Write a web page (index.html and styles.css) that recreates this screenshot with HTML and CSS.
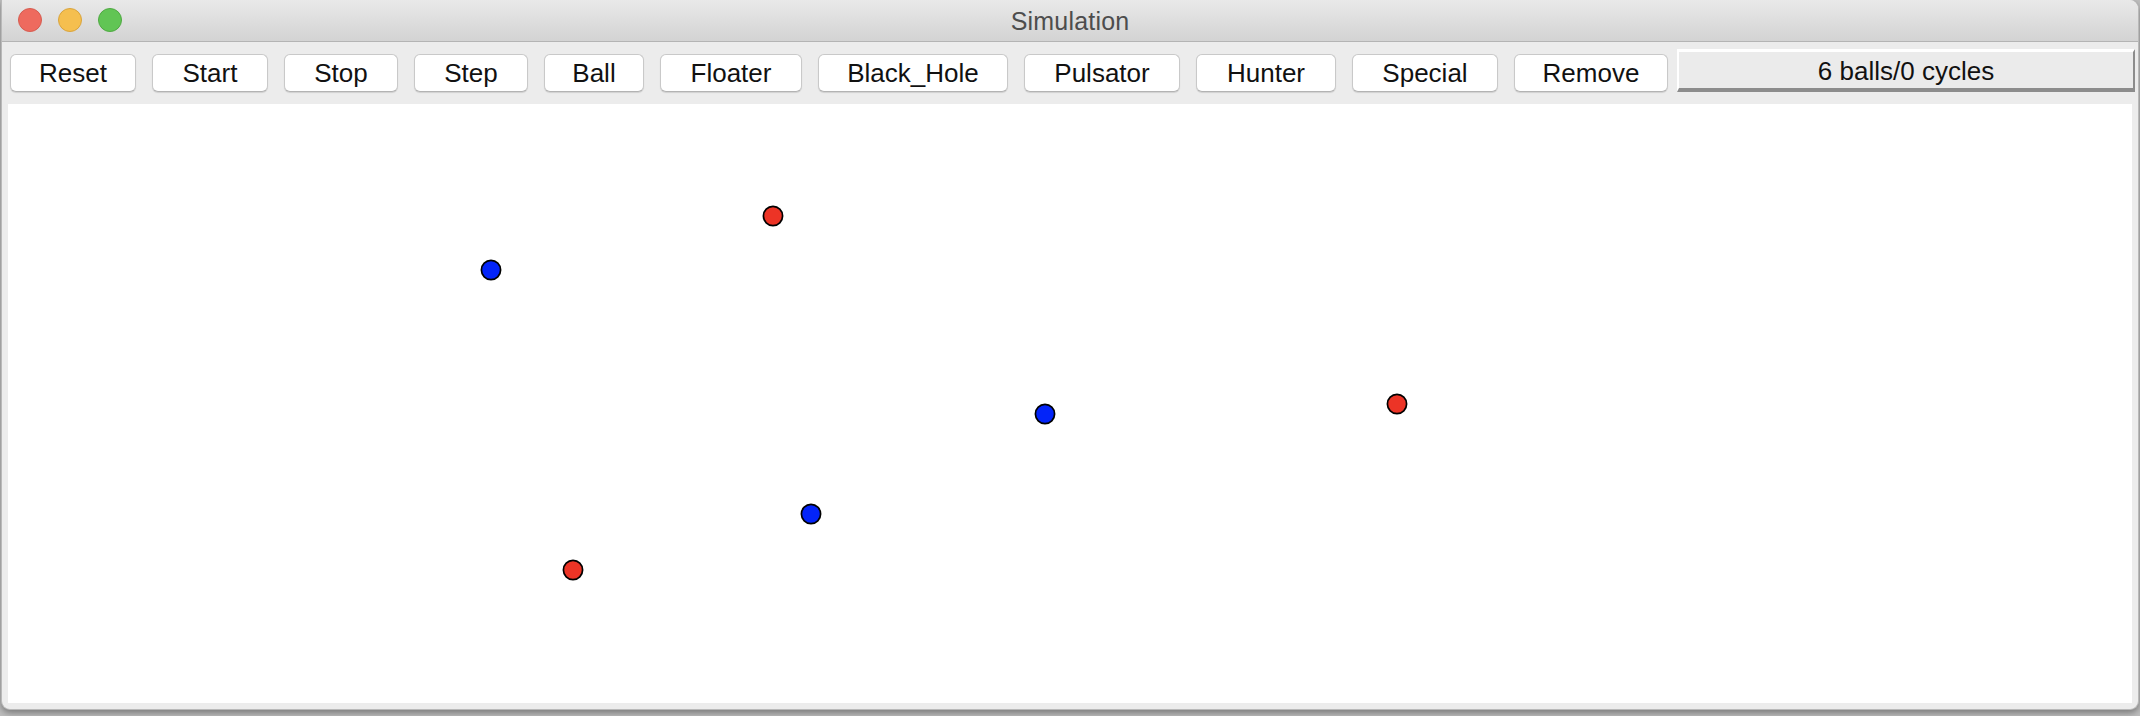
FILE: index.html
```html
<!DOCTYPE html>
<html>
<head>
<meta charset="utf-8">
<title>Simulation</title>
<link rel="stylesheet" href="styles.css">
</head>
<body>
<div class="window">
  <div class="titlebar">
    <div class="lights">
      <span class="light red"></span>
      <span class="light yellow"></span>
      <span class="light green"></span>
    </div>
    <div class="title">Simulation</div>
  </div>
  <div class="toolbar">
    <button class="btn w-reset">Reset</button>
    <button class="btn w-start">Start</button>
    <button class="btn w-stop">Stop</button>
    <button class="btn w-step">Step</button>
    <button class="btn w-ball">Ball</button>
    <button class="btn w-floater">Floater</button>
    <button class="btn w-black">Black_Hole</button>
    <button class="btn w-pulsator">Pulsator</button>
    <button class="btn w-hunter">Hunter</button>
    <button class="btn w-special">Special</button>
    <button class="btn w-remove">Remove</button>
    <div class="status">6 balls/0 cycles</div>
  </div>
  <div class="canvas">
    <svg class="field" width="2124" height="599" viewBox="0 0 2124 599">
      <circle class="ball blue" cx="483" cy="166" r="9.6"/>
      <circle class="ball red" cx="765" cy="112" r="9.6"/>
      <circle class="ball blue" cx="1037" cy="310" r="9.6"/>
      <circle class="ball red" cx="1389" cy="300" r="9.6"/>
      <circle class="ball red" cx="565" cy="466" r="9.6"/>
      <circle class="ball blue" cx="803" cy="410" r="9.6"/>
    </svg>
  </div>
</div>
</body>
</html>
```

FILE: styles.css
```css
html, body {
  margin: 0;
  padding: 0;
}
body {
  width: 2140px;
  height: 716px;
  background: #bdbdbd;
  overflow: hidden;
  font-family: "Liberation Sans", Arial, sans-serif;
}
.window {
  margin-left: 1px;
  width: 2136px;
  height: 709px;
  background: #ececec;
  border: 1px solid #b9b9b9;
  border-top: none;
  border-radius: 0 9px 9px 9px;
  box-shadow: 0 3px 6px rgba(0,0,0,0.35);
  display: flex;
  flex-direction: column;
  overflow: hidden;
}
.titlebar {
  position: relative;
  height: 41px;
  flex: none;
  background: linear-gradient(#e9e9e9, #d3d3d3);
  border-bottom: 1px solid #b4b4b4;
  display: flex;
  align-items: center;
  justify-content: center;
}
.lights {
  position: absolute;
  left: 16px;
  top: 8px;
  display: flex;
  gap: 16px;
}
.light {
  width: 22px;
  height: 22px;
  border-radius: 50%;
  border: 1px solid rgba(0,0,0,0.12);
}
.red { background: #ee6a5e; border-color: #d65c50; }
.yellow { background: #f5bf4f; border-color: #d9a43d; }
.green { background: #61c554; border-color: #4fa942; }
.title {
  font-size: 25px;
  color: #4d4d4d;
  margin-top: 2px;
  letter-spacing: 0.2px;
}
.toolbar {
  flex: none;
  display: flex;
  align-items: flex-end;
  padding: 7px 0 0 8px;
  height: 43px;
}
.btn {
  height: 38px;
  margin-right: 16px;
  padding: 0;
  background: #ffffff;
  border: 1px solid #c9c9c9;
  border-bottom-color: #b3b3b3;
  border-radius: 6px;
  box-shadow: 0 1px 1px rgba(0,0,0,0.12);
  font-family: "Liberation Sans", Arial, sans-serif;
  font-size: 26px;
  color: #111111;
  line-height: 29px;
}
.w-reset { width: 126px; }
.w-start { width: 116px; }
.w-stop { width: 114px; }
.w-step { width: 114px; }
.w-ball { width: 100px; }
.w-floater { width: 142px; }
.w-black { width: 190px; }
.w-pulsator { width: 156px; }
.w-hunter { width: 140px; }
.w-special { width: 146px; }
.w-remove { width: 154px; margin-right: 9px; }
.status {
  box-sizing: border-box;
  width: 458px;
  height: 43px;
  border-top: 3px solid #ffffff;
  border-left: 2px solid #ffffff;
  border-bottom: 4px solid #8c8c8c;
  border-right: 2px solid #8c8c8c;
  background: #ebebeb;
  font-size: 26px;
  color: #111111;
  line-height: 29px;
  text-align: center;
  padding-top: 5px;
}
.canvas {
  margin: 12px 0 0 6px;
  width: 2124px;
  height: 599px;
  background: #ffffff;
}
.field {
  display: block;
}
.ball {
  stroke: #000000;
  stroke-width: 1.7;
}
.ball.red { fill: #ec3426; }
.ball.blue { fill: #0324f9; }
```
